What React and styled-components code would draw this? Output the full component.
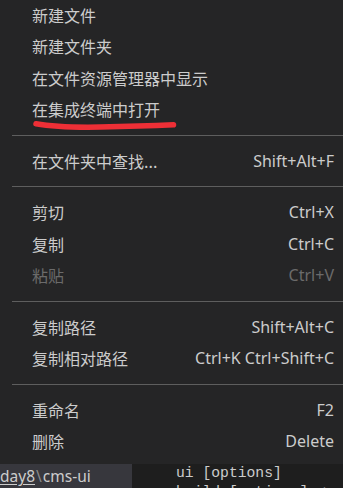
import React from "react";
import styled, { createGlobalStyle } from "styled-components";

const Global = createGlobalStyle`
  html, body { margin: 0; padding: 0; background: #1e1e1e; }
  body { width: 343px; height: 488px; overflow: hidden; }
  #root { width: 343px; height: 488px; }
`;

const Page = styled.div`
  width: 343px;
  height: 488px;
  display: flex;
  flex-direction: column;
  overflow: hidden;
  position: relative;
  font-family: "Noto Sans", "Noto Sans CJK SC", sans-serif;
`;

const Menu = styled.div`
  background: #252526;
  margin-top: -1.25px;
  padding-bottom: 7.25px;
  display: flex;
  flex-direction: column;
  position: relative;
`;

const Row = styled.div`
  height: 31.5px;
  display: flex;
  align-items: center;
  justify-content: space-between;
  padding: 0 9px 0 32px;
  font-size: 16px;
  color: ${(p) => (p.$disabled ? "#6b6b6b" : "#cccccc")};
`;

const Label = styled.span`
  font-family: "Noto Sans CJK SC", sans-serif;
  font-size: 16px;
`;

const Keys = styled.span`
  font-family: "Noto Sans", "Noto Sans CJK SC", sans-serif;
  font-size: 16px;
`;

const Sep = styled.div`
  height: 1px;
  margin: 10px 0 9px 12px;
  background: #5e5e5e;
`;

const Underline = styled.svg`
  position: absolute;
  left: 0;
  top: 0;
  pointer-events: none;
`;

const Bottom = styled.div`
  flex: 1;
  display: flex;
  min-height: 0;
`;

const Crumb = styled.div`
  width: 132px;
  background: #37373d;
  color: #cccccc;
  font-family: "Noto Sans", sans-serif;
  font-size: 15.5px;
  line-height: 24px;
  white-space: nowrap;
  overflow: hidden;
`;

const CrumbLink = styled.span`
  text-decoration: underline;
  text-underline-offset: 2px;
`;

const CrumbSep = styled.span`
  color: #8a8a8a;
  margin: 0 1px;
`;

const Terminal = styled.div`
  flex: 1;
  background: #1e1e1e;
  color: #cccccc;
  font-family: "Liberation Mono", "DejaVu Sans Mono", monospace;
  font-size: 14.7px;
  line-height: 19px;
  padding: 0 0 0 44px;
  white-space: pre;
  overflow: hidden;
`;

const groups = [
  [
    ["新建文件", ""],
    ["新建文件夹", ""],
    ["在文件资源管理器中显示", ""],
    ["在集成终端中打开", ""],
  ],
  [["在文件夹中查找...", "Shift+Alt+F"]],
  [
    ["剪切", "Ctrl+X"],
    ["复制", "Ctrl+C"],
    ["粘贴", "Ctrl+V", true],
  ],
  [
    ["复制路径", "Shift+Alt+C"],
    ["复制相对路径", "Ctrl+K Ctrl+Shift+C"],
  ],
  [
    ["重命名", "F2"],
    ["删除", "Delete"],
  ],
];

export default function App() {
  return (
    <Page>
      <Global />
      <Menu>
        {groups.map((g, gi) => (
          <React.Fragment key={gi}>
            {gi > 0 && <Sep />}
            {g.map(([label, keys, dis]) => (
              <Row key={label} $disabled={dis}>
                <Label>{label}</Label>
                <Keys>{keys}</Keys>
              </Row>
            ))}
          </React.Fragment>
        ))}
        <Underline width="343" height="140" viewBox="0 0 343 140">
          <path
            d="M36 123.5 Q 58 127.5 100 126.8 Q 140 126 173.5 124.5"
            fill="none"
            stroke="#ee2f36"
            strokeWidth="5.5"
            strokeLinecap="round"
            transform="translate(0 1.25)"
          />
        </Underline>
      </Menu>
      <Bottom>
        <Crumb>
          <CrumbLink>day8</CrumbLink>
          <CrumbSep>\</CrumbSep>cms-ui
        </Crumb>
        <Terminal>{"ui [options]\nbuild [options] <entry>"}</Terminal>
      </Bottom>
    </Page>
  );
}
